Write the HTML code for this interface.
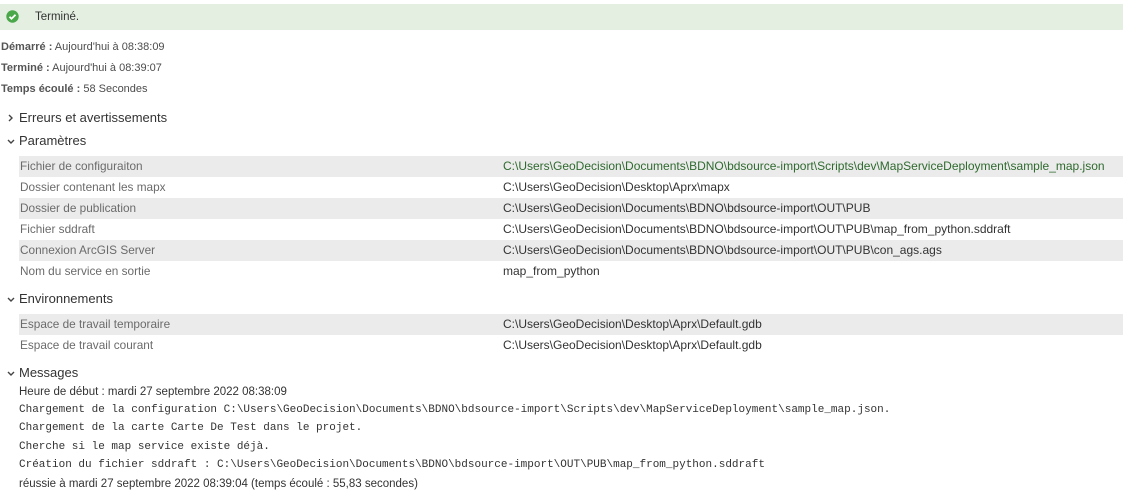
<!DOCTYPE html><html><head><meta charset="utf-8"><style>
body{margin:0;width:1123px;height:500px;background:#fff;font-family:"Liberation Sans",sans-serif;font-size:11px;color:#4c4c4c;position:relative;overflow:hidden}
.a{position:absolute;white-space:nowrap;line-height:16px}
.bar{position:absolute;left:0;top:4px;width:1123px;height:26px;background:#e4efe2}
.h{font-size:13px;color:#333;left:19px}
.row{position:absolute;left:19px;width:1104px;height:21px;line-height:21px;font-size:12px}
.row.s{background:#ebebeb}
.row .l{position:absolute;left:1px;color:#6b6b6b;font-size:11.8px}
.row .v{position:absolute;left:484px;color:#333}
.m{font-family:"Liberation Mono",monospace;font-size:11px;color:#333}
b{color:#555;font-weight:bold}
svg.c{position:absolute;left:7px}
</style></head><body>
<div class="bar"></div>
<svg style="position:absolute;left:6px;top:10px" width="13" height="13" viewBox="0 0 13 13"><circle cx="6.5" cy="6.5" r="6.2" fill="#4aa84a"/><path d="M3.5 6.7l2 2 4-4" stroke="#fff" stroke-width="1.8" fill="none"/></svg>
<div class="a" style="left:35px;top:9px;color:#333;font-size:11.5px">Terminé.</div>
<div class="a" style="left:1px;top:39px"><b>Démarré :</b> Aujourd'hui à 08:38:09</div>
<div class="a" style="left:1px;top:60px"><b>Terminé :</b> Aujourd'hui à 08:39:07</div>
<div class="a" style="left:1px;top:81px"><b>Temps écoulé :</b> 58 Secondes</div>
<svg class="c" style="top:114px" width="7" height="8" viewBox="0 0 7 8"><path d="M2 1l3 3-3 3" stroke="#444" stroke-width="1.4" fill="none"/></svg>
<div class="a h" style="top:110px">Erreurs et avertissements</div>
<svg class="c" style="top:138px" width="8" height="7" viewBox="0 0 8 7"><path d="M1 2l3 3 3-3" stroke="#444" stroke-width="1.4" fill="none"/></svg>
<div class="a h" style="top:133px">Paramètres</div>
<div class="row s" style="top:156px"><span class="l">Fichier de configuraiton</span><span class="v" style="color:#2f6a2f">C:\Users\GeoDecision\Documents\BDNO\bdsource-import\Scripts\dev\MapServiceDeployment\sample_map.json</span></div>
<div class="row" style="top:177px"><span class="l">Dossier contenant les mapx</span><span class="v">C:\Users\GeoDecision\Desktop\Aprx\mapx</span></div>
<div class="row s" style="top:198px"><span class="l">Dossier de publication</span><span class="v">C:\Users\GeoDecision\Documents\BDNO\bdsource-import\OUT\PUB</span></div>
<div class="row" style="top:219px"><span class="l">Fichier sddraft</span><span class="v">C:\Users\GeoDecision\Documents\BDNO\bdsource-import\OUT\PUB\map_from_python.sddraft</span></div>
<div class="row s" style="top:240px"><span class="l">Connexion ArcGIS Server</span><span class="v">C:\Users\GeoDecision\Documents\BDNO\bdsource-import\OUT\PUB\con_ags.ags</span></div>
<div class="row" style="top:261px"><span class="l">Nom du service en sortie</span><span class="v">map_from_python</span></div>
<svg class="c" style="top:296px" width="8" height="7" viewBox="0 0 8 7"><path d="M1 2l3 3 3-3" stroke="#444" stroke-width="1.4" fill="none"/></svg>
<div class="a h" style="top:291px">Environnements</div>
<div class="row s" style="top:314px"><span class="l">Espace de travail temporaire</span><span class="v">C:\Users\GeoDecision\Desktop\Aprx\Default.gdb</span></div>
<div class="row" style="top:335px"><span class="l">Espace de travail courant</span><span class="v">C:\Users\GeoDecision\Desktop\Aprx\Default.gdb</span></div>
<svg class="c" style="top:370px" width="8" height="7" viewBox="0 0 8 7"><path d="M1 2l3 3 3-3" stroke="#444" stroke-width="1.4" fill="none"/></svg>
<div class="a h" style="top:365px">Messages</div>
<div class="a" style="left:19px;top:384px;color:#333;font-size:11.5px">Heure de début : mardi 27 septembre 2022 08:38:09</div>
<div class="a m" style="left:19px;top:402px">Chargement de la configuration C:\Users\GeoDecision\Documents\BDNO\bdsource-import\Scripts\dev\MapServiceDeployment\sample_map.json.</div>
<div class="a m" style="left:19px;top:420px">Chargement de la carte Carte De Test dans le projet.</div>
<div class="a m" style="left:19px;top:439px">Cherche si le map service existe déjà.</div>
<div class="a m" style="left:19px;top:457px">Création du fichier sddraft : C:\Users\GeoDecision\Documents\BDNO\bdsource-import\OUT\PUB\map_from_python.sddraft</div>
<div class="a" style="left:19px;top:476px;color:#333;font-size:11.5px">réussie à mardi 27 septembre 2022 08:39:04 (temps écoulé : 55,83 secondes)</div>
</body></html>
